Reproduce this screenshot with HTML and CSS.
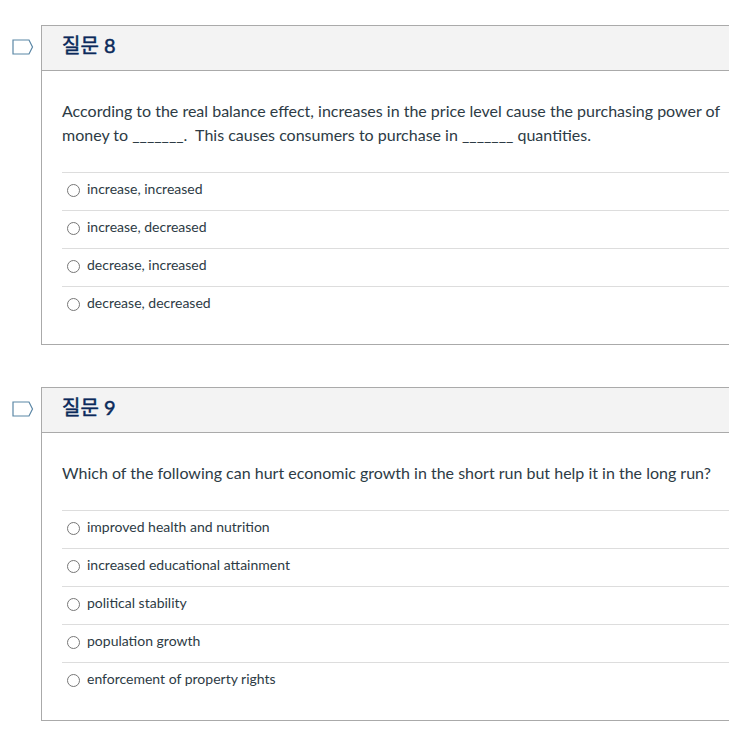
FILE: index.html
```html
<!DOCTYPE html>
<html lang="ko">
<head>
<meta charset="utf-8">
<title>질문</title>
<link rel="stylesheet" href="styles.css">
</head>
<body>
<main class="quiz">
  <section class="question">
    <svg class="flag" width="22" height="16" viewBox="0 0 22 16"><path d="M1 1H17L20.5 8L17 15H1Z"/></svg>
    <header class="head"><h2>질문 8</h2></header>
    <div class="body">
      <p class="text">According to the real balance effect, increases in the price level cause the purchasing power of money to _______.&nbsp; This causes consumers to purchase in _______ quantities.</p>
      <ul class="answers">
        <li><span class="radio"></span>increase, increased</li>
        <li><span class="radio"></span>increase, decreased</li>
        <li><span class="radio"></span>decrease, increased</li>
        <li><span class="radio"></span>decrease, decreased</li>
      </ul>
    </div>
  </section>
  <section class="question">
    <svg class="flag" width="22" height="16" viewBox="0 0 22 16"><path d="M1 1H17L20.5 8L17 15H1Z"/></svg>
    <header class="head"><h2>질문 9</h2></header>
    <div class="body">
      <p class="text">Which of the following can hurt economic growth in the short run but help it in the long run?</p>
      <ul class="answers">
        <li><span class="radio"></span>improved health and nutrition</li>
        <li><span class="radio"></span>increased educational attainment</li>
        <li><span class="radio"></span>political stability</li>
        <li><span class="radio"></span>population growth</li>
        <li><span class="radio"></span>enforcement of property rights</li>
      </ul>
    </div>
  </section>
</main>
</body>
</html>
```

FILE: styles.css
```css
html, body {
  margin: 0;
  padding: 0;
  background: #fff;
  overflow: hidden;
}
body {
  height: 733px;
  font-family: Lato, "Noto Sans CJK KR", sans-serif;
  color: #2d3b45;
}
.quiz {
  display: flex;
  flex-direction: column;
  gap: 42px;
  width: 720px;
  padding: 25px 0 0 41px;
}
.question {
  position: relative;
  border: 1px solid #aaa;
}
.flag {
  position: absolute;
  left: -30px;
  top: 13px;
  fill: #fff;
  stroke: #5b87a6;
  stroke-width: 1.2;
}
.head {
  background: #f3f3f3;
  border-bottom: 1px solid #aaa;
  height: 44px;
  padding-left: 20px;
  display: flex;
  align-items: flex-start;
}
.head h2 {
  margin: 0;
  font-size: 20px;
  font-weight: 400;
  -webkit-text-stroke: 0.5px #0b2a5b;
  line-height: 38px;
  color: #0b2a5b;
}
.body {
  padding: 28px 0 20px 20px;
}
.text {
  margin: 0 0 25px;
  width: 660px;
  font-size: 16px;
  line-height: 24px;
}
.answers {
  list-style: none;
  margin: 0;
  padding: 0;
}
.answers li {
  display: flex;
  align-items: flex-start;
  gap: 7px;
  height: 31px;
  padding: 6px 0 0 5px;
  border-top: 1px solid #ddd;
  font-size: 14px;
  line-height: 20px;
}
.radio {
  width: 13px;
  height: 13px;
  margin-top: 5px;
  border: 1px solid #777;
  border-radius: 50%;
  box-sizing: border-box;
  flex: none;
}
```
